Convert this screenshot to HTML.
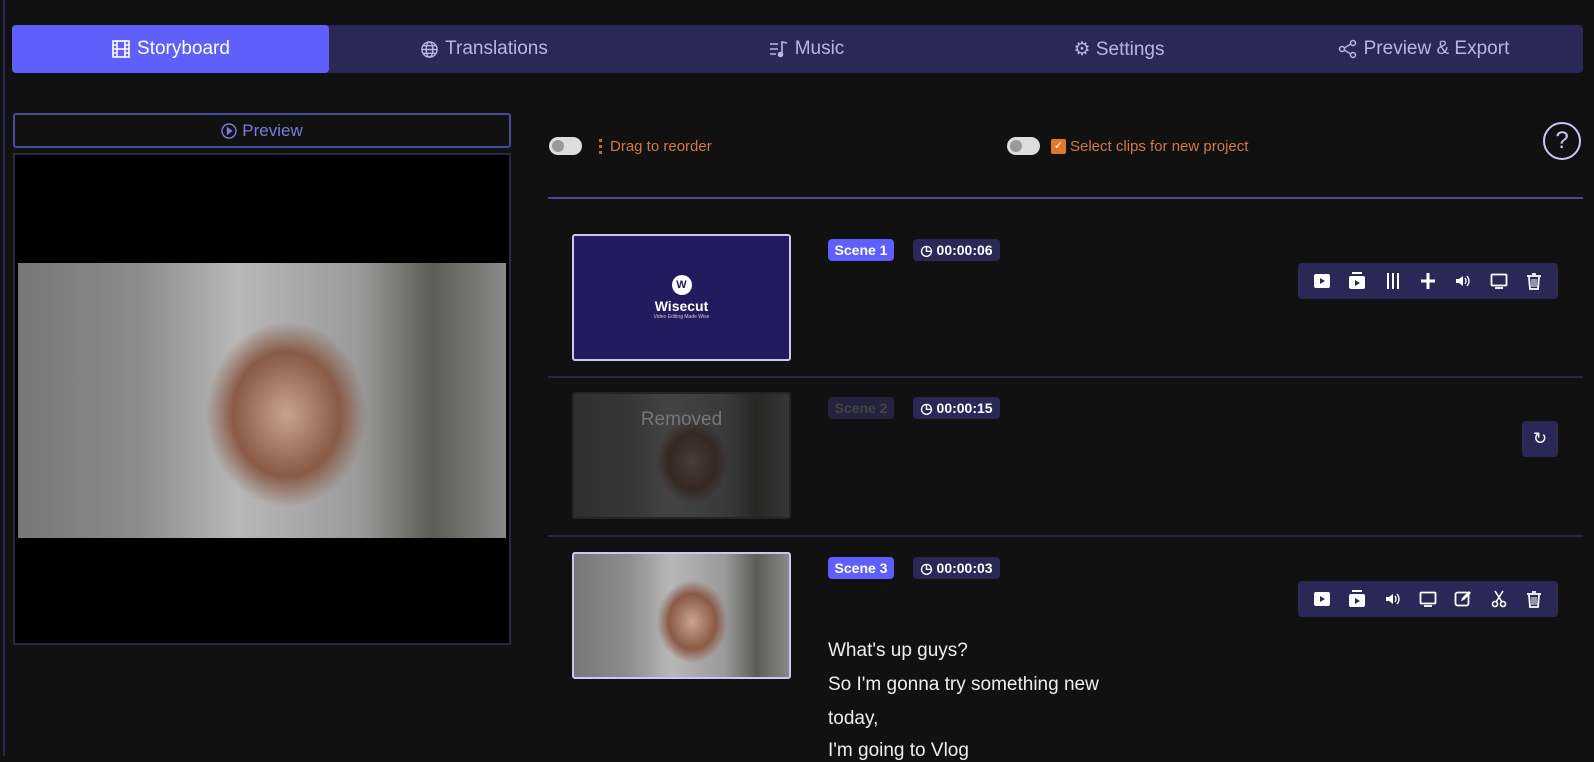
<!DOCTYPE html>
<html><head><style>
*{margin:0;padding:0;box-sizing:border-box}
body{width:1594px;height:756px;background:#111112;font-family:"Liberation Sans",sans-serif;position:relative;overflow:hidden;color:#fff}
.a{position:absolute}
.tabs{left:12px;top:25px;width:1571px;height:48px;background:#2b2858;border-radius:4px}
.tab{top:0;height:48px;display:flex;align-items:center;justify-content:center;font-size:19px;color:#b8b6e0;gap:6px}
.tab.act{background:#5f5ffb;color:#fff;border-radius:4px}
.badge{height:22px;border-radius:4px;font-size:14px;font-weight:bold;display:flex;align-items:center;justify-content:center;gap:3px}
.sc{background:#5f5ffb;width:66px}
.tm{background:#2b2858;width:87px}
.tb{height:36px;background:#2b2858;border-radius:4px;display:flex;align-items:center;justify-content:space-around;padding:0 6px}
.tb svg{display:block}
.sep{left:548px;width:1035px;height:2px;background:#2a2740}
.thumb{width:219px;height:127px;border:2px solid #c9c8f0;border-radius:3px;overflow:hidden}
.photo{background:radial-gradient(ellipse 22% 45% at 55% 55%,#c9a48e 0,#8a5a45 50%,transparent 75%),linear-gradient(90deg,#777 0,#8c8c8c 25%,#b8b8b8 45%,#9a9a9a 70%,#5c5e55 85%,#8a8a8a 100%)}
.txt{left:828px;font-size:19px;color:#eee}
</style></head><body>
<svg width="0" height="0" style="position:absolute"><defs>
<symbol id="play" viewBox="0 0 18 18"><rect x="1" y="2" width="16" height="14" rx="2" fill="#fff"/><path d="M7 6l5 3-5 3z" fill="#2b2858"/></symbol>
<symbol id="play2" viewBox="0 0 18 18"><rect x="4" y="0" width="10" height="2" fill="#fff"/><rect x="1" y="4" width="16" height="13" rx="2" fill="#fff"/><path d="M7 8l5 3-5 3z" fill="#2b2858"/></symbol>
<symbol id="spl" viewBox="0 0 18 18"><path d="M4 1v16M9 1v16M14 1v16" stroke="#fff" stroke-width="2"/></symbol>
<symbol id="plus" viewBox="0 0 18 18"><path d="M9 1v16M2 9h14" stroke="#fff" stroke-width="3"/></symbol>
<symbol id="vol" viewBox="0 0 18 18"><path d="M2 7h3l4-3v10l-4-3H2z" fill="#fff"/><path d="M11 6q2 3 0 6M13 4q4 5 0 10" stroke="#fff" fill="none" stroke-width="1.3"/></symbol>
<symbol id="scr" viewBox="0 0 18 18"><rect x="1.5" y="2.5" width="15" height="11" rx="1" stroke="#fff" fill="none" stroke-width="1.8"/><path d="M5 16h8" stroke="#fff" stroke-width="1.8"/></symbol>
<symbol id="trash" viewBox="0 0 18 18"><path d="M2 4h14M7 2h4M4 5l1 12h8l1-12" stroke="#fff" fill="none" stroke-width="1.8"/><path d="M7 7v8M9 7v8M11 7v8" stroke="#fff" stroke-width="1"/></symbol>
<symbol id="edit" viewBox="0 0 18 18"><rect x="1.5" y="2.5" width="13" height="13" rx="2" stroke="#fff" fill="none" stroke-width="1.8"/><path d="M7 11l1-3 7-7 2 2-7 7z" fill="#fff"/></symbol>
<symbol id="cut" viewBox="0 0 18 18"><circle cx="5" cy="14" r="2.5" stroke="#fff" fill="none" stroke-width="1.6"/><circle cx="13" cy="14" r="2.5" stroke="#fff" fill="none" stroke-width="1.6"/><path d="M6 12L13 1M12 12L5 1" stroke="#fff" stroke-width="1.6"/></symbol>
</defs></svg>
<div class="a" style="left:3px;top:0;width:2px;height:756px;background:#2b2858"></div>
<div class="a tabs">
 <div class="a tab act" style="left:0;width:317px"><svg width="20" height="20" viewBox="0 0 20 20" fill="none" stroke="#fff" stroke-width="1.6"><rect x="2" y="2" width="16" height="16"/><path d="M6 2v16M14 2v16M2 10h16M2 6h4M2 14h4M14 6h4M14 14h4"/></svg>Storyboard</div>
 <div class="a tab" style="left:317px;width:310px"><svg width="19" height="19" viewBox="0 0 20 20" fill="none" stroke="#b8b6e0" stroke-width="1.5"><circle cx="10" cy="10" r="8"/><ellipse cx="10" cy="10" rx="3.5" ry="8"/><path d="M2 10h16M3.5 6h13M3.5 14h13"/></svg>Translations</div>
 <div class="a tab" style="left:627px;width:335px"><svg width="20" height="18" viewBox="0 0 20 18" fill="none" stroke="#b8b6e0" stroke-width="1.6"><path d="M1 4h8M1 9h8M1 14h6M13 14V2l5 1"/><circle cx="11.5" cy="14.5" r="2" fill="#b8b6e0"/></svg>Music</div>
 <div class="a tab" style="left:962px;width:290px">⚙ Settings</div>
 <div class="a tab" style="left:1252px;width:319px"><svg width="20" height="20" viewBox="0 0 20 20" fill="none" stroke="#b8b6e0" stroke-width="1.5"><circle cx="15" cy="4" r="2.5"/><circle cx="4" cy="10" r="2.5"/><circle cx="15" cy="16" r="2.5"/><path d="M6 9l7-4M6 11l7 4"/></svg>Preview &amp; Export</div>
</div>
<div class="a" style="left:13px;top:113px;width:498px;height:35px;border:2px solid #4a47a0;border-radius:3px;color:#7d7ad8;font-size:17px;display:flex;align-items:center;justify-content:center;gap:5px"><svg width="16" height="16" viewBox="0 0 16 16" fill="none" stroke="#7d7ad8" stroke-width="1.4"><circle cx="8" cy="8" r="7"/><path d="M6.5 5v6l4-3z" fill="#7d7ad8"/></svg>Preview</div>
<div class="a" style="left:13px;top:153px;width:498px;height:492px;border:2px solid #2a2840;background:#000"></div>
<div class="a photo" style="left:18px;top:263px;width:488px;height:275px"></div>
<div class="a" style="left:549px;top:137px;width:33px;height:18px;border-radius:9px;background:#ddd"><div style="margin:3px;width:12px;height:12px;border-radius:6px;background:#999"></div></div>
<div class="a" style="left:599px;top:139px;width:3px;height:15px;border-left:3px dotted #c0673a"></div>
<div class="a" style="left:610px;top:138px;color:#d0784a;font-size:15px">Drag to reorder</div>
<div class="a" style="left:1007px;top:137px;width:33px;height:18px;border-radius:9px;background:#ddd"><div style="margin:3px;width:12px;height:12px;border-radius:6px;background:#999"></div></div>
<div class="a" style="left:1051px;top:139px;width:15px;height:15px;background:#e07a2a;border-radius:2px;font-size:11px;text-align:center;line-height:15px">✓</div>
<div class="a" style="left:1070px;top:138px;color:#d0784a;font-size:15px">Select clips for new project</div>
<div class="a" style="left:1543px;top:122px;width:38px;height:38px;border:2px solid #c9c8f0;border-radius:50%;color:#c9c8f0;font-size:24px;text-align:center;line-height:34px">?</div>
<div class="a" style="left:548px;top:197px;width:1035px;height:2px;background:#4a47a0"></div>

<div class="a thumb" style="left:572px;top:234px;background:#241a5e;display:flex;flex-direction:column;align-items:center;justify-content:center">
 <div style="width:20px;height:20px;border-radius:50%;background:#fff;color:#241a5e;font-size:11px;font-weight:bold;text-align:center;line-height:20px">W</div>
 <div style="font-size:14px;font-weight:bold;margin-top:3px">Wisecut</div>
 <div style="font-size:5px;color:#ccc">Video Editing Made Wise</div>
</div>
<div class="a badge sc" style="left:828px;top:239px">Scene 1</div>
<div class="a badge tm" style="left:913px;top:239px">◷ 00:00:06</div>
<div class="a tb" style="left:1298px;top:263px;width:260px"><svg width="18" height="18"><use href="#play"/></svg><svg width="18" height="18"><use href="#play2"/></svg><svg width="18" height="18"><use href="#spl"/></svg><svg width="18" height="18"><use href="#plus"/></svg><svg width="18" height="18"><use href="#vol"/></svg><svg width="18" height="18"><use href="#scr"/></svg><svg width="18" height="18"><use href="#trash"/></svg></div>
<div class="a sep" style="top:376px"></div>

<div class="a thumb photo" style="left:572px;top:392px;border-color:#555;opacity:.3"></div>
<div class="a" style="left:572px;top:409px;width:219px;text-align:center;color:#777;font-size:19px">Removed</div>
<div class="a badge" style="left:828px;top:397px;width:66px;background:#24223e;color:#444">Scene 2</div>
<div class="a badge tm" style="left:913px;top:397px">◷ 00:00:15</div>
<div class="a tb" style="left:1522px;top:421px;width:36px;justify-content:center;font-size:17px">↻</div>
<div class="a sep" style="top:535px"></div>

<div class="a thumb photo" style="left:572px;top:552px"></div>
<div class="a badge sc" style="left:828px;top:557px">Scene 3</div>
<div class="a badge tm" style="left:913px;top:557px">◷ 00:00:03</div>
<div class="a tb" style="left:1298px;top:581px;width:260px"><svg width="18" height="18"><use href="#play"/></svg><svg width="18" height="18"><use href="#play2"/></svg><svg width="18" height="18"><use href="#vol"/></svg><svg width="18" height="18"><use href="#scr"/></svg><svg width="18" height="18"><use href="#edit"/></svg><svg width="18" height="18"><use href="#cut"/></svg><svg width="18" height="18"><use href="#trash"/></svg></div>
<div class="a txt" style="top:640px">What's up guys?</div>
<div class="a txt" style="top:674px">So I'm gonna try something new</div>
<div class="a txt" style="top:708px">today,</div>
<div class="a txt" style="top:740px">I'm going to Vlog</div>
</body></html>
